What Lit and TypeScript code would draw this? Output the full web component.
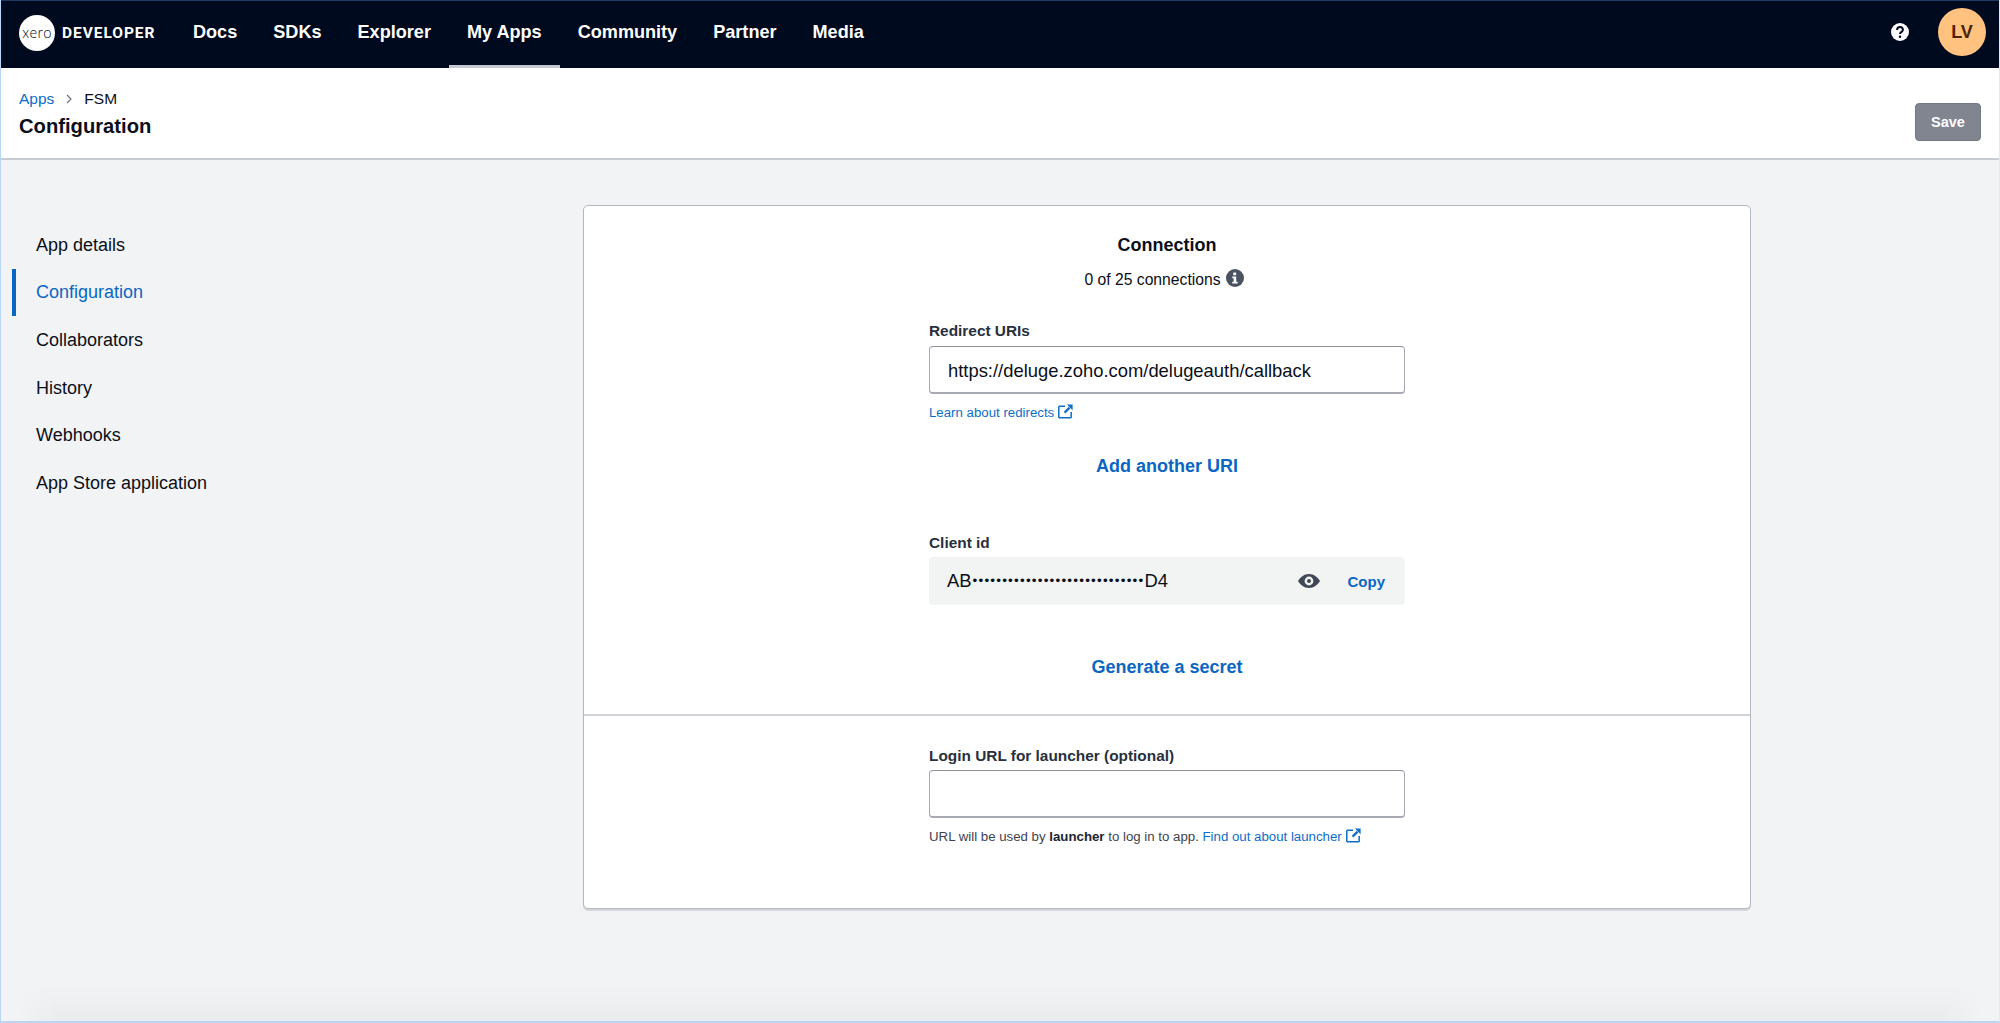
import { LitElement, html, css } from "lit";
import { customElement } from "lit/decorators.js";

const NAV = ["Docs", "SDKs", "Explorer", "My Apps", "Community", "Partner", "Media"];
const SIDE = ["App details", "Configuration", "Collaborators", "History", "Webhooks", "App Store application"];

const extIcon = html`<svg class="ext" viewBox="0 0 15 15" width="15" height="15" fill="none" stroke="currentColor" stroke-width="1.5">
  <path d="M7 2.2H1.6a.8.8 0 0 0-.8.8v10a.8.8 0 0 0 .8.8h10.8a.8.8 0 0 0 .8-.8V8"/>
  <path d="M6.6 8.6 11.6 3.6" stroke-width="2.2"/>
  <path d="M9 0.6h5.6v5.6z" fill="currentColor" stroke="none"/>
</svg>`;

@customElement("app-root")
export class AppRoot extends LitElement {
  static styles = css`
    :host {
      display: block;
      font-family: "Liberation Sans", Arial, sans-serif;
      color: #0b0f19;
    }
    * { box-sizing: border-box; }
    .page {
      position: relative;
      height: 1023px;
      background: #f2f3f5;
      display: flex;
      flex-direction: column;
      border-left: 1px solid #b9d5f7;
      border-right: 1px solid #e4ecdf;
      border-bottom: 2px solid #b9d5f7;
      overflow: hidden;
    }
    .shade {
      position: absolute;
      left: 0; right: 0; bottom: 0;
      height: 36px;
      background: linear-gradient(to bottom, rgba(235,236,238,0), #ebeced 85%);
      -webkit-mask-image: linear-gradient(to right, transparent 20px, #000 55px, #000 calc(100% - 55px), transparent calc(100% - 20px));
      mask-image: linear-gradient(to right, transparent 20px, #000 55px, #000 calc(100% - 55px), transparent calc(100% - 20px));
    }
    .nav {
      height: 68px;
      flex: none;
      margin-left: -1px;
      margin-right: -1px;
      background: #000a1e;
      border-top: 1px solid #1d3a66;
      display: flex;
      align-items: stretch;
      color: #fff;
    }
    .brand {
      width: 175px;
      flex: none;
      display: flex;
      align-items: center;
      gap: 7px;
      padding: 0 0 4px 19px;
    }
    .logo {
      width: 36px;
      height: 36px;
      flex: none;
      border-radius: 50%;
      background: #fff;
      color: #000a1e;
      display: flex;
      align-items: center;
      justify-content: center;
      font: 300 14px "Open Sans", sans-serif;
      letter-spacing: 0.3px;
    }
    .dev {
      font: 700 15.5px Roboto, sans-serif;
      letter-spacing: 0.95px;
    }
    .item {
      display: flex;
      align-items: center;
      padding: 0 18px 5px;
      font-size: 18.1px;
      font-weight: 700;
    }
    .item.on { box-shadow: inset 0 -3px 0 #c8cad3; }
    .spacer { flex: 1; }
    .help { align-self: center; margin: 0 29px 5px 0; display: block; }
    .avatar {
      align-self: center;
      width: 48px;
      height: 48px;
      margin: 0 14px 5px 0;
      border-radius: 50%;
      background: #ffc27f;
      color: #4a2303;
      font-size: 18px;
      font-weight: 700;
      display: flex;
      align-items: center;
      justify-content: center;
    }
    .head {
      height: 92px;
      flex: none;
      margin-left: -1px;
      margin-right: -1px;
      background: #fff;
      border-bottom: 2px solid #c9cbd3;
      display: flex;
      align-items: flex-start;
      justify-content: space-between;
      padding: 22px 19px 0 19px;
    }
    .crumbs {
      display: flex;
      align-items: center;
      height: 18px;
      font-size: 15.5px;
    }
    .crumbs a { color: #0b6ec8; }
    .crumbs svg { margin: 0 12px 0 12px; }
    h1 {
      margin: 5px 0 0;
      font-size: 20.2px;
      line-height: 26px;
      font-weight: 700;
    }
    .save {
      margin-top: 13px;
      width: 66px;
      height: 38px;
      border-radius: 4px;
      background: #80858f;
      border: 1px solid #747a85;
      color: #fff;
      font-size: 14.5px;
      font-weight: 700;
      display: flex;
      align-items: center;
      justify-content: center;
    }
    .main {
      flex: 1;
      display: grid;
      grid-template-columns: 582px 1168px;
      align-items: start;
    }
    .side { padding: 61px 0 0 11px; }
    .side div {
      height: 47.6px;
      display: flex;
      align-items: center;
      padding: 1px 0 0 24px;
      font-size: 18px;
    }
    .side .on {
      color: #0b66c3;
      box-shadow: inset 4px 0 0 #0b66c3;
    }
    .card {
      margin-top: 45px;
      height: 704px;
      background: #fff;
      border: 1px solid #b4b7bf;
      border-radius: 5px;
      box-shadow: 0 2px 0 #d4d6dc;
      text-align: center;
    }
    .col {
      width: 476px;
      margin: 0 auto;
      text-align: left;
    }
    h2 {
      margin: 28px 0 0;
      text-align: center;
      font-size: 18px;
      line-height: 22px;
      font-weight: 700;
    }
    .count {
      margin-top: 14px;
      padding-right: 6px;
      display: flex;
      align-items: center;
      justify-content: center;
      gap: 5px;
      height: 20px;
      font-size: 15.7px;
    }
    .count svg { position: relative; top: -2px; }
    .lab {
      display: block;
      font-size: 15.4px;
      line-height: 20px;
      font-weight: 700;
      color: #28303d;
    }
    .lab.a { margin-top: 31px; }
    .lab.b { margin-top: 56px; }
    .lab.c { margin-top: 30px; }
    .field {
      margin-top: 5px;
      height: 48px;
      border-style: solid;
      border-width: 1px 1.5px 2px 1.5px;
      border-color: #8e929d #a6a9b2 #a6a9b2 #a6a9b2;
      border-radius: 4px;
      background: #fff;
      padding: 2px 18px 0;
      display: flex;
      align-items: center;
      font-size: 18.4px;
    }
    .field.tight { margin-top: 4px; }
    .note {
      margin-top: 10px;
      height: 18px;
      font-size: 13.25px;
      line-height: 18px;
      color: #3c4350;
      display: flex;
      align-items: center;
      white-space: pre;
    }
    .note a { color: #0b6ec8; display: flex; align-items: center; }
    .note b { color: #1e2530; }
    .ext { margin-left: 4px; position: relative; top: -2px; flex: none; }
    .action {
      text-align: center;
      color: #0b66c3;
      font-size: 18px;
      line-height: 22px;
      font-weight: 700;
    }
    .action.a { margin-top: 33px; }
    .action.b { margin-top: 51px; }
    .secret {
      margin-top: 4px;
      height: 48px;
      border-radius: 4px;
      background: #f2f4f4;
      display: flex;
      align-items: center;
      padding: 0 20px 0 18px;
      font-size: 18.4px;
    }
    .secret .val { flex: 1; display: flex; align-items: center; }
    .secret .dots {
      font-size: 13.5px;
      letter-spacing: 1.2px;
      margin: 0 0 0 1px;
      position: relative;
      top: -1px;
    }
    .secret .copy {
      margin-left: 28px;
      color: #0b66c3;
      font-size: 15px;
      font-weight: 700;
    }
    hr {
      border: 0;
      height: 2px;
      background: #d0d2d7;
      margin: 36px 0 0;
    }
  `;

  render() {
    return html`
      <div class="page">
        <div class="nav">
          <div class="brand">
            <span class="logo">xero</span>
            <span class="dev">DEVELOPER</span>
          </div>
          ${NAV.map((n) => html`<div class="item ${n === "My Apps" ? "on" : ""}">${n}</div>`)}
          <div class="spacer"></div>
          <svg class="help" viewBox="0 0 18 18" width="18" height="18">
            <circle cx="9" cy="9" r="9" fill="#fff"/>
            <path d="M6.1 7a2.9 2.9 0 0 1 5.8 0c0 1.8-2.9 2-2.9 4" fill="none" stroke="#000a1e" stroke-width="2"/>
            <circle cx="9" cy="13.8" r="1.25" fill="#000a1e"/>
          </svg>
          <div class="avatar">LV</div>
        </div>
        <div class="head">
          <div>
            <div class="crumbs">
              <a>Apps</a>
              <svg viewBox="0 0 6 10" width="6" height="10" fill="none" stroke="#6b7280" stroke-width="1.2"><path d="M1 1l4 4-4 4"/></svg>
              <span>FSM</span>
            </div>
            <h1>Configuration</h1>
          </div>
          <div class="save">Save</div>
        </div>
        <div class="main">
          <div class="side">
            ${SIDE.map((s) => html`<div class=${s === "Configuration" ? "on" : ""}>${s}</div>`)}
          </div>
          <div class="card">
            <h2>Connection</h2>
            <div class="count">
              <span>0 of 25 connections</span>
              <svg viewBox="0 0 18 18" width="18" height="18">
                <circle cx="9" cy="9" r="9" fill="#4b5363"/>
                <rect x="7.2" y="3.4" width="3" height="2.8" rx=".6" fill="#fff"/>
                <path d="M6.3 7.6h3.9v5.2h1.4v1.7H6.3v-1.7h1.4V9.3H6.3z" fill="#fff"/>
              </svg>
            </div>
            <div class="col">
              <div class="lab a">Redirect URIs</div>
              <div class="field">https://deluge.zoho.com/delugeauth/callback</div>
              <div class="note"><a>Learn about redirects${extIcon}</a></div>
            </div>
            <div class="action a">Add another URI</div>
            <div class="col">
              <div class="lab b">Client id</div>
              <div class="secret">
                <span class="val">AB<span class="dots">•••••••••••••••••••••••••••••</span>D4</span>
                <svg viewBox="0 0 22 14" width="22" height="14">
                  <path fill-rule="evenodd" fill="#404756" d="M11 0c5 0 9 3.6 11 7-2 3.4-6 7-11 7S2 10.4 0 7c2-3.4 6-7 11-7zm0 2.6a4.4 4.4 0 1 0 0 8.8 4.4 4.4 0 0 0 0-8.8zM11 5a2 2 0 1 1 0 4 2 2 0 0 1 0-4z"/>
                </svg>
                <span class="copy">Copy</span>
              </div>
            </div>
            <div class="action b">Generate a secret</div>
            <hr />
            <div class="col">
              <div class="lab c">Login URL for launcher (optional)</div>
              <div class="field tight"></div>
              <div class="note">URL will be used by <b>launcher</b> to log in to app. <a>Find out about launcher${extIcon}</a></div>
            </div>
          </div>
        </div>
        <div class="shade"></div>
      </div>
    `;
  }
}
